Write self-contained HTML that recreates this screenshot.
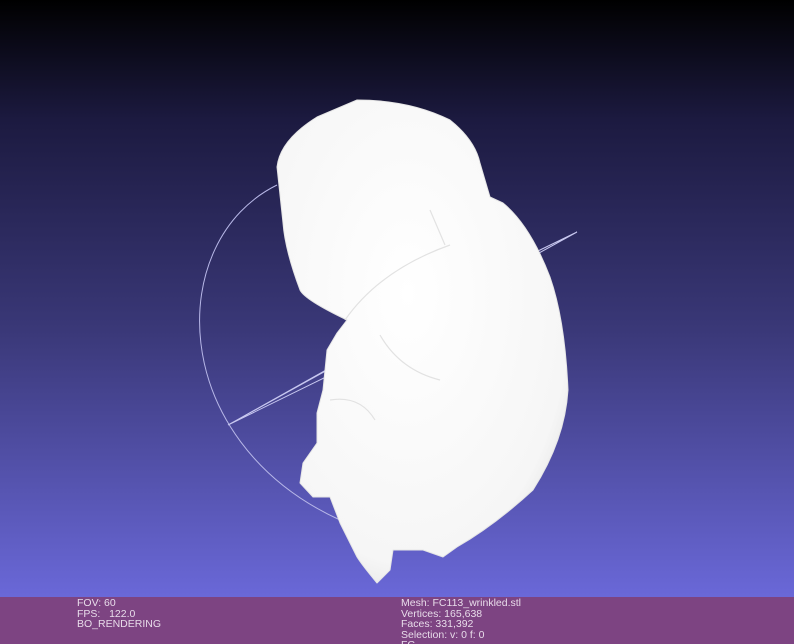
<!DOCTYPE html>
<html><head><meta charset="utf-8"><style>
html,body{margin:0;padding:0;width:794px;height:644px;overflow:hidden}
body{background:linear-gradient(#000 0px,#1c1a40 120px,#3a3878 330px,#6a68d8 597px);position:relative;font-family:"Liberation Sans",sans-serif}
#bar{position:absolute;left:0;top:597px;width:794px;height:47px;background:#7d4482;color:#e8dcea;font-size:10.5px;line-height:10.6px}
.c{position:absolute;top:1px}
</style></head><body>
<svg width="794" height="597" style="position:absolute;left:0;top:0">
<defs><radialGradient id="g" cx="0.45" cy="0.4" r="0.7"><stop offset="0" stop-color="#fff"/><stop offset="0.8" stop-color="#f6f6f6"/><stop offset="1" stop-color="#dedede"/></radialGradient></defs>
<path d="M277,185 C165,240 165,440 340,520" fill="none" stroke="#b8b8e8" stroke-width="1"/>
<path d="M228,425 L577,232 L540,250 L228,425 M228,425 L330,375" fill="none" stroke="#c8c8f0" stroke-width="1"/>
<path d="M357,100 Q410,100 450,120 Q475,140 480,163 L490,197 L503,203 Q530,225 550,277 Q565,320 568,390 Q565,440 533,490 Q495,525 457,547 L443,557 L423,550 L393,550 L390,570 L377,583 Q362,565 357,557 L340,523 L330,497 L313,497 L300,483 L303,463 L317,443 L317,413 L323,390 L327,350 L337,333 L347,320 Q305,300 300,290 Q285,250 283,223 L277,167 Q280,140 317,117 Z" fill="url(#g)" stroke="#e6e6e6" stroke-width="1" stroke-linejoin="round"/>
<path d="M345,320 Q380,270 450,245 M380,335 Q400,370 440,380 M330,400 Q360,395 375,420 M430,210 L445,245" fill="none" stroke="#e2e2e2" stroke-width="1.2"/>
</svg>
<div id="bar">
<div class="c" style="left:77px">FOV: 60<br>FPS: &nbsp;&nbsp;122.0<br>BO_RENDERING</div>
<div class="c" style="left:401px">Mesh: FC113_wrinkled.stl<br>Vertices: 165,638<br>Faces: 331,392<br>Selection: v: 0 f: 0<br>FC</div>
</div>
</body></html>
